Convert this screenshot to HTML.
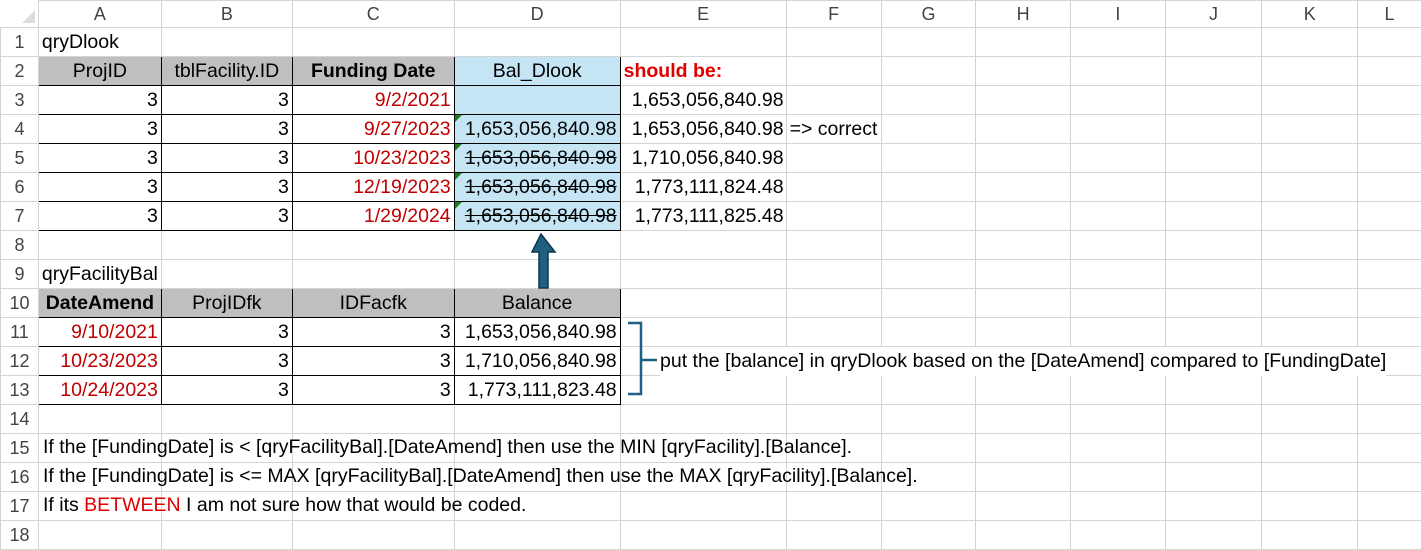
<!DOCTYPE html>
<html><head><style>
body{margin:0;background:#fff;width:1422px;height:533px;overflow:hidden;font-family:"Liberation Sans",Arial,sans-serif;}
table{border-collapse:collapse;table-layout:fixed;position:absolute;left:0;top:0;}
td{border:1px solid #d4d4d4;height:28px;padding:0 3px;font-size:19.5px;line-height:20px;white-space:nowrap;overflow:visible;color:#000;}
tr.h td{height:26px;background:#fff;color:#444;text-align:center;font-size:18px;border-color:#d4d4d4;}
td.rn{text-align:center;color:#444;padding:0;font-size:18px;}
.r{text-align:right}.c{text-align:center}.b{font-weight:bold}
.red{color:#c00000}
.hd{background:#bfbfbf;border:1px solid #000;}
.bx{border:1px solid #000;}
.bl{background:#c5e5f5;}
.s{text-decoration:line-through;}
.tri{position:relative}
.tri:before{content:"";position:absolute;left:0;top:0;border-top:7px solid #1e7b1e;border-right:7px solid transparent;}
</style></head><body>
<table>
<colgroup><col style="width:38px"><col style="width:122px"><col style="width:131px"><col style="width:162px"><col style="width:166px"><col style="width:166px"><col style="width:95px"><col style="width:95px"><col style="width:95px"><col style="width:95px"><col style="width:97px"><col style="width:96px"><col style="width:64px"></colgroup>
<tr class="h"><td style="background:#fff"></td><td>A</td><td>B</td><td>C</td><td>D</td><td>E</td><td>F</td><td>G</td><td>H</td><td>I</td><td>J</td><td>K</td><td>L</td></tr>
<tr><td class="rn">1</td><td>qryDlook</td><td></td><td></td><td></td><td></td><td></td><td></td><td></td><td></td><td></td><td></td><td></td></tr>
<tr><td class="rn">2</td><td class="hd c">ProjID</td><td class="hd c">tblFacility.ID</td><td class="hd c b">Funding Date</td><td class="bx bl c">Bal_Dlook</td><td class="b" style="color:#e00000">should be:</td><td></td><td></td><td></td><td></td><td></td><td></td><td></td></tr>
<tr><td class="rn">3</td><td class="bx r">3</td><td class="bx r">3</td><td class="bx r red">9/2/2021</td><td class="bx bl"></td><td class="r" style="padding-right:2px">1,653,056,840.98</td><td></td><td></td><td></td><td></td><td></td><td></td><td></td></tr>
<tr><td class="rn">4</td><td class="bx r">3</td><td class="bx r">3</td><td class="bx r red">9/27/2023</td><td class="bx bl r tri">1,653,056,840.98</td><td class="r" style="padding-right:2px">1,653,056,840.98</td><td style="overflow:visible">=&gt; correct</td><td></td><td></td><td></td><td></td><td></td><td></td></tr>
<tr><td class="rn">5</td><td class="bx r">3</td><td class="bx r">3</td><td class="bx r red">10/23/2023</td><td class="bx bl r tri s">1,653,056,840.98</td><td class="r" style="padding-right:2px">1,710,056,840.98</td><td></td><td></td><td></td><td></td><td></td><td></td><td></td></tr>
<tr><td class="rn">6</td><td class="bx r">3</td><td class="bx r">3</td><td class="bx r red">12/19/2023</td><td class="bx bl r tri s">1,653,056,840.98</td><td class="r" style="padding-right:2px">1,773,111,824.48</td><td></td><td></td><td></td><td></td><td></td><td></td><td></td></tr>
<tr><td class="rn">7</td><td class="bx r">3</td><td class="bx r">3</td><td class="bx r red">1/29/2024</td><td class="bx bl r tri s">1,653,056,840.98</td><td class="r" style="padding-right:2px">1,773,111,825.48</td><td></td><td></td><td></td><td></td><td></td><td></td><td></td></tr>
<tr><td class="rn">8</td><td></td><td></td><td></td><td></td><td></td><td></td><td></td><td></td><td></td><td></td><td></td><td></td></tr>
<tr><td class="rn">9</td><td>qryFacilityBal</td><td></td><td></td><td></td><td></td><td></td><td></td><td></td><td></td><td></td><td></td><td></td></tr>
<tr><td class="rn">10</td><td class="hd c b">DateAmend</td><td class="hd c">ProjIDfk</td><td class="hd c">IDFacfk</td><td class="hd c">Balance</td><td></td><td></td><td></td><td></td><td></td><td></td><td></td><td></td></tr>
<tr><td class="rn">11</td><td class="bx r red">9/10/2021</td><td class="bx r">3</td><td class="bx r">3</td><td class="bx r">1,653,056,840.98</td><td></td><td></td><td></td><td></td><td></td><td></td><td></td><td></td></tr>
<tr><td class="rn">12</td><td class="bx r red">10/23/2023</td><td class="bx r">3</td><td class="bx r">3</td><td class="bx r">1,710,056,840.98</td><td></td><td></td><td></td><td></td><td></td><td></td><td></td><td></td></tr>
<tr><td class="rn">13</td><td class="bx r red">10/24/2023</td><td class="bx r">3</td><td class="bx r">3</td><td class="bx r">1,773,111,823.48</td><td></td><td></td><td></td><td></td><td></td><td></td><td></td><td></td></tr>
<tr><td class="rn">14</td><td></td><td></td><td></td><td></td><td></td><td></td><td></td><td></td><td></td><td></td><td></td><td></td></tr>
<tr><td class="rn">15</td><td></td><td></td><td></td><td></td><td></td><td></td><td></td><td></td><td></td><td></td><td></td><td></td></tr>
<tr><td class="rn">16</td><td></td><td></td><td></td><td></td><td></td><td></td><td></td><td></td><td></td><td></td><td></td><td></td></tr>
<tr><td class="rn">17</td><td></td><td></td><td></td><td></td><td></td><td></td><td></td><td></td><td></td><td></td><td></td><td></td></tr>
<tr><td class="rn">18</td><td></td><td></td><td></td><td></td><td></td><td></td><td></td><td></td><td></td><td></td><td></td><td></td></tr>
</table>
<div style="position:absolute;left:0;top:0;width:38px;height:27px;background:#fff"></div>
<div style="position:absolute;left:22px;top:10px;border-bottom:13px solid #dcdcdc;border-left:13px solid transparent"></div>
<div style="position:absolute;left:43px;top:433px;font-size:19.5px;line-height:29px;white-space:nowrap">
If the [FundingDate] is &lt; [qryFacilityBal].[DateAmend] then use the MIN [qryFacility].[Balance].<br>
If the [FundingDate] is &lt;= MAX [qryFacilityBal].[DateAmend] then use the MAX [qryFacility].[Balance].<br>
If its <span style="color:#e00000">BETWEEN</span> I am not sure how that would be coded.</div>
<div style="position:absolute;left:660px;top:347px;font-size:19.5px;line-height:29px;white-space:nowrap;background:#fff">put the [balance] in qryDlook based on the [DateAmend] compared to [FundingDate]</div>
<svg style="position:absolute;left:0;top:0" width="1422" height="533">
<path d="M539,288 V252 H532 L541,234 L555,252 H548 V288 Z" fill="#1f5f82" stroke="#0d3550" stroke-width="1.5"/>
<path d="M628,323 H641 V394 H628 M641,360 H657" fill="none" stroke="#1f5f82" stroke-width="2.5"/>
</svg>
</body></html>
